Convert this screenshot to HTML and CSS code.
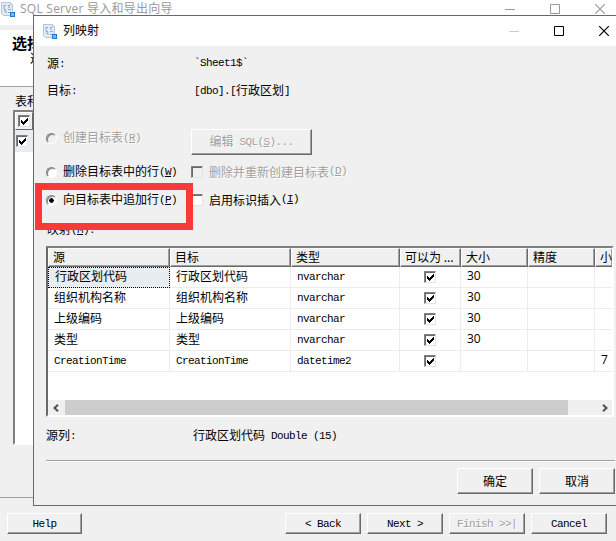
FILE: index.html
```html
<!DOCTYPE html>
<html lang="zh-CN">
<head>
<meta charset="utf-8">
<title>SQL Server 导入和导出向导</title>
<link rel="stylesheet" href="styles.css">
</head>
<body>
<svg class="defs" aria-hidden="true">
  <symbol id="doc" viewBox="0 0 16 16">
    <path d="M1.5 1.5h9l2 2v11h-9l-2-2z" fill="#e3ebf8" stroke="#b4c4e2"/>
    <path d="M4 4.5h2M4 4v4M4 8.5h2M5 8v3h2M8 4.5h2M9 5v2M8 8.5h3M8 11.5h2" fill="none" stroke="#8fa6d0"/>
    <path d="M10.5 1.5v2h2" fill="#fff" stroke="#b4c4e2"/>
    <rect x="10.5" y="11.5" width="4" height="4" fill="#6bbcf5" stroke="#2474c7"/>
  </symbol>
  <symbol id="min" viewBox="0 0 10 10"><path d="M0 5.5h10" stroke="currentColor"/></symbol>
  <symbol id="max" viewBox="0 0 10 10"><path d="M.5.5h9v9h-9z" fill="none" stroke="currentColor"/></symbol>
  <symbol id="close" viewBox="0 0 10 10"><path d="M0 0l10 10M10 0L0 10" stroke="currentColor" stroke-width="1.2"/></symbol>
  <symbol id="tick" viewBox="0 0 7 7"><path d="M0 2v3h1v1h1v1h1V6h1V5h1V4h1V3h1V0H6v1H5v1H4v1H3v1H2V3H1V2z"/></symbol>
</svg>
<div class="wizard">
  <header class="titlebar wizard-title">
    <svg class="app-icon"><use href="#doc"/></svg><span class="caption">SQL Server 导入和导出向导</span>
    <div class="controls"><svg><use href="#min"/></svg><svg><use href="#max"/></svg><svg><use href="#close"/></svg></div>
  </header>
  <div class="heading"><b>选择</b><p>选</p></div>
  <main class="wizard-body">
    <div class="tables-label">表和</div>
    <div class="tables">
      <div class="tables-head"><span class="check"><svg><use href="#tick"/></svg></span></div>
      <div class="tables-row"><span class="check"><svg><use href="#tick"/></svg></span></div>
    </div>
  </main>
  <footer class="wizard-footer">
    <button class="help"><i>Help</i></button>
    <button><i>&lt; Back</i></button><button><i>Next &gt;</i></button><button disabled><i>Finish &gt;&gt;|</i></button><button><i>Cancel</i></button>
  </footer>
</div>

<section class="dialog">
  <header class="titlebar dialog-title">
    <svg class="app-icon"><use href="#doc"/></svg><span class="caption">列映射</span>
    <div class="controls"><svg class="off"><use href="#min"/></svg><svg><use href="#max"/></svg><svg><use href="#close"/></svg></div>
  </header>
  <div class="dialog-body">
    <div class="info"><span>源<i>:</i></span><i>`Sheet1$`</i></div>
    <div class="info"><span>目标<i>:</i></span><span><i>[dbo].[</i>行政区划<i>]</i></span></div>
    <div class="option first disabled"><span class="radio"></span><label>创建目标表<i>(<u>R</u>)</i></label><button class="edit" disabled>编辑<i> SQL(<u>S</u>)...</i></button></div>
    <div class="option"><span class="radio"></span><label>删除目标表中的行<i>(<u>W</u>)</i></label><span class="disabled pair"><span class="check"></span>删除并重新创建目标表<i>(<u>D</u>)</i></span></div>
    <div class="option"><span class="radio on"></span><label>向目标表中追加行<i>(<u>P</u>)</i></label><span class="pair"><span class="check"></span>启用标识插入<i>(<u>I</u>)</i></span></div>
    <div class="map-label">映射<i>(<u>M</u>):</i></div>
    <div class="grid">
      <div class="row head"><span>源</span><span>目标</span><span>类型</span><span>可以为 ...</span><span>大小</span><span>精度</span><span>小数</span></div>
      <div class="row"><span class="selected">行政区划代码</span><span>行政区划代码</span><span><i>nvarchar</i></span><span class="mid"><span class="check"><svg><use href="#tick"/></svg></span></span><span class="num">30</span><span></span><span></span></div>
      <div class="row"><span>组织机构名称</span><span>组织机构名称</span><span><i>nvarchar</i></span><span class="mid"><span class="check"><svg><use href="#tick"/></svg></span></span><span class="num">30</span><span></span><span></span></div>
      <div class="row"><span>上级编码</span><span>上级编码</span><span><i>nvarchar</i></span><span class="mid"><span class="check"><svg><use href="#tick"/></svg></span></span><span class="num">30</span><span></span><span></span></div>
      <div class="row"><span>类型</span><span>类型</span><span><i>nvarchar</i></span><span class="mid"><span class="check"><svg><use href="#tick"/></svg></span></span><span class="num">30</span><span></span><span></span></div>
      <div class="row"><span><i>CreationTime</i></span><span><i>CreationTime</i></span><span><i>datetime2</i></span><span class="mid"><span class="check"><svg><use href="#tick"/></svg></span></span><span></span><span></span><span class="num">7</span></div>
      <div class="scroll">
        <svg viewBox="0 0 6 7"><path d="M5 .3L1.5 3.5L5 6.7"/></svg><span class="thumb"></span><svg class="next" viewBox="0 0 6 7"><path d="M1 .3L4.5 3.5L1 6.7"/></svg>
      </div>
    </div>
    <div class="info source"><span>源列<i>:</i></span><span>行政区划代码<i> Double (15)</i></span></div>
    <div class="actions"><button>确定</button><button>取消</button></div>
  </div>
</section>
<div class="highlight"></div>
</body>
</html>
```
FILE: styles.css
```css
* { box-sizing: border-box; }
body { margin: 0; width: 616px; height: 541px; overflow: hidden; background: #f0f0f0; color: #000; font: 12px/14px "Noto Sans CJK SC", sans-serif; }
i { position: relative; top: -1px; font: 11px/14px "Liberation Mono", monospace; letter-spacing: -.6px; white-space: pre; }
u { text-underline-offset: 1px; }
p { margin: 0; }
svg { display: block; flex: none; }
.defs { position: absolute; width: 0; height: 0; }
.wizard { display: flex; flex-direction: column; width: 616px; height: 541px; }
.titlebar { display: flex; align-items: center; background: #fff; font: 12px/16px "Open Sans", "Noto Sans CJK SC", sans-serif; }
.app-icon { width: 16px; height: 16px; }
.caption { margin-left: 4px; white-space: nowrap; }
.controls { display: flex; gap: 35px; margin-left: auto; }
.controls svg { width: 10px; height: 10px; }
.controls .off { color: #ccc; }
.wizard-title { height: 25px; padding: 0 11px 7px 0; color: #999; }
.wizard-title .caption { letter-spacing: .25px; }
.heading { height: 62px; padding: 5px 0 0 12px; border-top: 5px solid #f0f0f0; border-bottom: 1px solid #a0a0a0; background: #fff; white-space: nowrap; }
.heading b { display: block; font-size: 15px; line-height: 16px; }
.heading p { padding-left: 18px; }
.wizard-body { height: 411px; padding: 7px 0 0 13px; border-bottom: 1px solid #a0a0a0; }
.tables-label { height: 16px; padding-left: 2px; }
.tables { height: 335px; border: 2px solid; border-color: #808080 #fff #fff #808080; background: #fff; }
.tables-head { display: flex; width: 18px; height: 18px; padding: 2px; border: 1px solid; border-color: #fff #696969 #696969 #fff; background: #f0f0f0; }
.tables-row { display: flex; height: 22px; padding: 5px 1px; background: #e8edf2; }
.check { display: inline-flex; flex: none; width: 12px; height: 12px; padding: 2px 0 0 2px; border: 1px solid; border-color: #808080 #e3e3e3 #e3e3e3 #808080; box-shadow: inset 1px 1px #696969; background: #fff; }
.check svg { width: 7px; height: 7px; }
button { width: 76px; height: 26px; padding: 0; border: 1px solid; border-color: #fff #696969 #696969 #fff; box-shadow: inset -1px -1px #a0a0a0; background: #f0f0f0; color: #000; font: inherit; }
button:disabled, .disabled { color: #a0a0a0; text-shadow: 1px 1px #fff; }
.wizard-footer { display: flex; gap: 6px; padding: 15px 9px 0 7px; }
.wizard-footer button { height: 21px; line-height: 14px; }
.wizard-footer .help { width: 75px; margin-right: auto; }
.dialog { position: absolute; left: 33px; top: 15px; width: 583px; height: 491px; border: 1px solid #696969; border-right: 0; background: #f0f0f0; }
.dialog-title { height: 30px; padding: 0 7px 0 8px; }
.dialog-title .caption { margin-left: 5px; }
.dialog-body { padding: 4px 2px 0 12px; }
.info { display: grid; grid-template-columns: 147px 1fr; align-items: center; height: 27px; padding-left: 1px; }
.option { display: flex; align-items: center; height: 28px; white-space: nowrap; }
.option label { width: 128px; margin-left: 6px; }
.option.first { height: 34px; margin: 17px 0 3px; }
.option .edit { width: 121px; margin-top: 7px; }
.radio { flex: none; width: 11px; height: 11px; border: 1px solid; border-color: #808080 #fff #fff #808080; border-radius: 50%; box-shadow: inset 1px 1px #8a8a8a; background: #fff; }
.radio.on { background: radial-gradient(circle, #000 0 2px, #fff 2.5px); }
.disabled .radio { background: #f0f0f0; }
.disabled .check { background: #f0f0f0; }
.pair { display: flex; align-items: center; }
.pair .check { margin-right: 6px; }
.map-label { height: 32px; padding: 8px 0 0 1px; }
.grid { width: 568px; height: 171px; overflow: hidden; border: 2px solid; border-color: #808080 #fff #fff #696969; background: #fff; display: flex; flex-direction: column; }
.row { display: grid; grid-template-columns: 122px 121px 109px 61px 67px 67px 18px; height: 21px; flex: none; }
.row > span { overflow: hidden; padding: 2px 0 0 6px; border-right: 1px solid #ececec; border-bottom: 1px solid #ececec; white-space: nowrap; }
.row.head { height: 19px; }
.row.head > span { padding: 1px 0 0 4px; border: 1px solid; border-color: #fff #696969 #696969 #fff; box-shadow: inset -1px -1px #a0a0a0; background: #f0f0f0; }
.row > .selected { border: 1px dotted #000; background: #e8edf2; padding-top: 1px; }
.row > .mid { display: flex; padding: 4px 0 0 24px; }
.row > .num { font-family: "Open Sans", sans-serif; }
.scroll { display: flex; align-items: center; height: 15px; margin-top: auto; background: #f0f0f0; }
.scroll svg { width: 6px; height: 8px; margin: 0 6px 0 5px; fill: none; stroke: #505050; stroke-width: 2; }
.scroll .thumb { width: 503px; height: 15px; background: #cdcdcd; }
.scroll .next { margin: 0 4px 0 auto; }
.source { height: 43px; margin-left: -1px; padding-bottom: 5px; }
.actions { display: flex; justify-content: flex-end; gap: 6px; margin-right: -1px; padding-top: 7px; border-top: 1px solid #a0a0a0; box-shadow: inset 0 1px #fff; }
.highlight { position: absolute; left: 35px; top: 183px; width: 158px; height: 47px; border: 7px solid #fc3939; }
```
